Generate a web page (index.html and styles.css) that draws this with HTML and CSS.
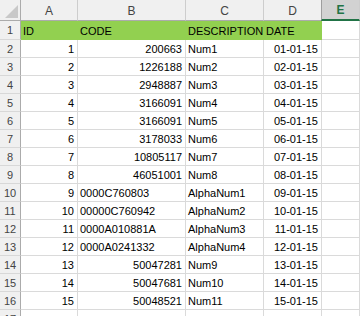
FILE: index.html
```html
<!DOCTYPE html>
<html lang="en">
    <head>
        <title>Sheet1</title>
        <meta charset="UTF-8">
        <link rel="stylesheet" href="styles.css">
    </head>
    <body>
        <div class="sheet">
            <div class="corner"><span class="corner-mark"></span></div>
            <div class="col-head">A</div>
            <div class="col-head">B</div>
            <div class="col-head">C</div>
            <div class="col-head">D</div>
            <div class="col-head selected">E</div>

            <div class="row-head first">1</div>
            <div class="cell fill first">ID</div>
            <div class="cell fill first">CODE</div>
            <div class="cell fill first">DESCRIPTION</div>
            <div class="cell fill first">DATE</div>
            <div class="cell first"></div>

            <div class="row-head">2</div><div class="cell num">1</div><div class="cell num">200663</div><div class="cell">Num1</div><div class="cell num">01-01-15</div><div class="cell"></div>
            <div class="row-head">3</div><div class="cell num">2</div><div class="cell num">1226188</div><div class="cell">Num2</div><div class="cell num">02-01-15</div><div class="cell"></div>
            <div class="row-head">4</div><div class="cell num">3</div><div class="cell num">2948887</div><div class="cell">Num3</div><div class="cell num">03-01-15</div><div class="cell"></div>
            <div class="row-head">5</div><div class="cell num">4</div><div class="cell num">3166091</div><div class="cell">Num4</div><div class="cell num">04-01-15</div><div class="cell"></div>
            <div class="row-head">6</div><div class="cell num">5</div><div class="cell num">3166091</div><div class="cell">Num5</div><div class="cell num">05-01-15</div><div class="cell"></div>
            <div class="row-head">7</div><div class="cell num">6</div><div class="cell num">3178033</div><div class="cell">Num6</div><div class="cell num">06-01-15</div><div class="cell"></div>
            <div class="row-head">8</div><div class="cell num">7</div><div class="cell num">10805117</div><div class="cell">Num7</div><div class="cell num">07-01-15</div><div class="cell"></div>
            <div class="row-head">9</div><div class="cell num">8</div><div class="cell num">46051001</div><div class="cell">Num8</div><div class="cell num">08-01-15</div><div class="cell"></div>
            <div class="row-head">10</div><div class="cell num">9</div><div class="cell">0000C760803</div><div class="cell">AlphaNum1</div><div class="cell num">09-01-15</div><div class="cell"></div>
            <div class="row-head">11</div><div class="cell num">10</div><div class="cell">00000C760942</div><div class="cell">AlphaNum2</div><div class="cell num">10-01-15</div><div class="cell"></div>
            <div class="row-head">12</div><div class="cell num">11</div><div class="cell">0000A010881A</div><div class="cell">AlphaNum3</div><div class="cell num">11-01-15</div><div class="cell"></div>
            <div class="row-head">13</div><div class="cell num">12</div><div class="cell">0000A0241332</div><div class="cell">AlphaNum4</div><div class="cell num">12-01-15</div><div class="cell"></div>
            <div class="row-head">14</div><div class="cell num">13</div><div class="cell num">50047281</div><div class="cell">Num9</div><div class="cell num">13-01-15</div><div class="cell"></div>
            <div class="row-head">15</div><div class="cell num">14</div><div class="cell num">50047681</div><div class="cell">Num10</div><div class="cell num">14-01-15</div><div class="cell"></div>
            <div class="row-head">16</div><div class="cell num">15</div><div class="cell num">50048521</div><div class="cell">Num11</div><div class="cell num">15-01-15</div><div class="cell"></div>
            <div class="row-head last">17</div><div class="cell"></div><div class="cell"></div><div class="cell"></div><div class="cell"></div><div class="cell"></div>
        </div>
    </body>
</html>
```

FILE: styles.css
```css
* {
    box-sizing: border-box;
}

body {
    margin: 0;
    background-color: #FFFFFF;
    font-family: 'Liberation Sans', Arial, sans-serif;
    font-size: 11px;
    color: #000000;
    overflow: hidden;
}

.sheet {
    display: grid;
    grid-template-columns: 21px 57px 108px 78px 58px 1fr;
    grid-template-rows: 21px 19px;
    grid-auto-rows: 18px;
    width: 360px;
}

.corner,
.col-head,
.row-head {
    background-color: #F0F0F0;
    color: #444444;
    font-size: 12px;
    border-right: 1px solid #CDCDCD;
    border-bottom: 1px solid #CDCDCD;
    display: flex;
    align-items: center;
    justify-content: center;
}

.corner {
    position: relative;
    border-bottom-color: #ABABAB;
    border-right-color: #ABABAB;
}
.corner-mark {
    position: absolute;
    right: 2px;
    bottom: 2px;
    width: 13px;
    height: 13px;
    background-color: #C8C8C8;
    clip-path: polygon(100% 0, 100% 100%, 0 100%);
}

.col-head {
    border-bottom-color: #ABABAB;
    padding-top: 1px;
}
.col-head.selected {
    background-color: #D2D2D2;
    color: #217346;
    font-weight: bold;
    border-left: 1px solid #9E9E9E;
    border-bottom: 2px solid #217346;
    margin-left: -1px;
}

.row-head {
    border-right-color: #ABABAB;
    border-bottom-color: #D8D8D8;
    font-size: 11px;
}
.row-head.last {
    align-items: flex-start;
    padding-top: 3px;
}

.cell {
    border-right: 1px solid #DADADA;
    border-bottom: 1px solid #DADADA;
    padding: 0 3px 0 2px;
    display: flex;
    align-items: center;
    white-space: nowrap;
    overflow: hidden;
}
.cell.num {
    justify-content: flex-end;
}
.cell.fill {
    background-color: #92D050;
    border-right-color: #92D050;
    border-bottom-color: #92D050;
    padding-right: 0;
}
.cell.first {
    padding-top: 1px;
}
```
